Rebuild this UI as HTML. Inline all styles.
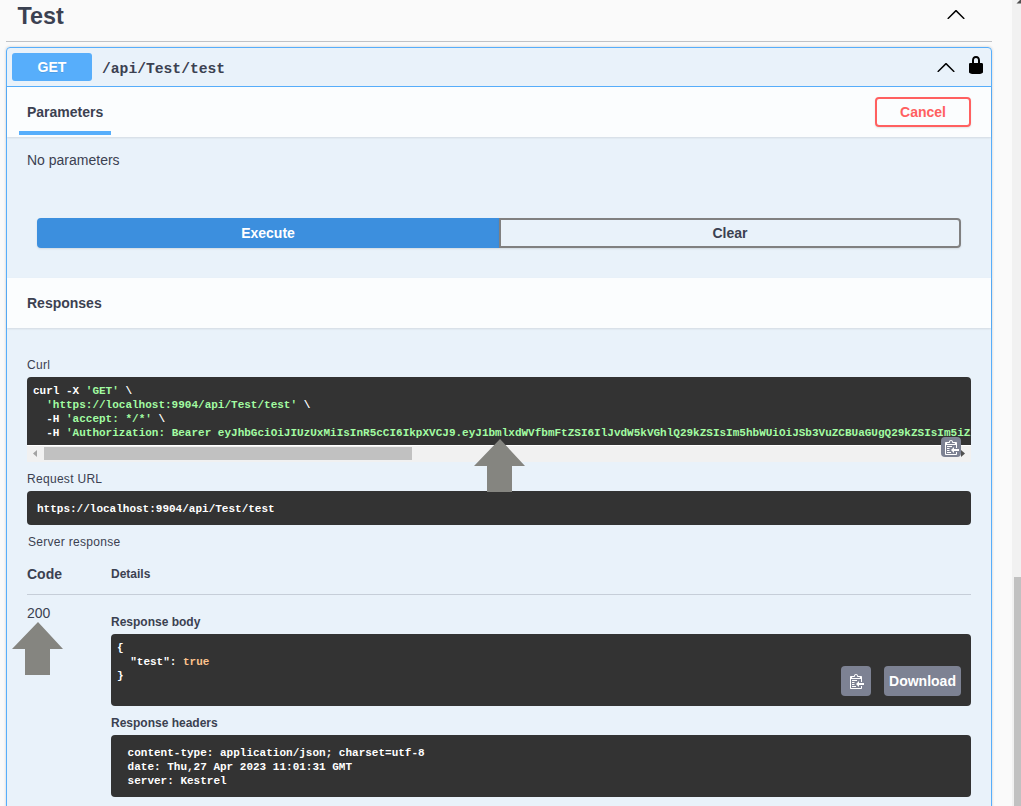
<!DOCTYPE html>
<html lang="en">
<head>
<meta charset="utf-8">
<title>Swagger UI</title>
<style>
html,body{margin:0;padding:0;}
body{width:1021px;height:806px;overflow:hidden;position:relative;background:#fafafa;
  font-family:"Liberation Sans",Arial,sans-serif;color:#3b4151;}
.a{position:absolute;white-space:nowrap;line-height:1;margin:0;padding:0;}
.b{font-weight:700;}
.mono{font-family:"Liberation Mono","DejaVu Sans Mono",monospace;font-weight:700;}
#tagline{left:6px;top:41px;width:986px;height:1px;background:rgba(59,65,81,.3);}
#opblock{left:6px;top:47px;width:984px;height:800px;border:1px solid #57aefb;border-radius:4px;
  background:rgba(87,174,251,.1);box-shadow:0 0 3px rgba(0,0,0,.19);}
#sumline{left:7px;top:86px;width:984px;height:1px;background:#57aefb;}
#get{left:12px;top:53px;width:80px;height:28px;border-radius:3px;background:#57aefb;color:#fff;
  font-size:14px;font-weight:700;text-align:center;line-height:28px;text-shadow:0 1px 0 rgba(0,0,0,.1);}
.sechead{left:7px;width:984px;height:50px;background:rgba(255,255,255,.8);box-shadow:0 1px 2px rgba(0,0,0,.1);}
#tabline{left:19px;top:131px;width:92px;height:4px;background:#57aefb;}
.btn{box-sizing:border-box;height:30px;font-size:14px;font-weight:700;text-align:center;line-height:26px;
  border:2px solid gray;border-radius:4px;box-shadow:0 1px 2px rgba(0,0,0,.1);}
#cancel{left:875px;top:97px;width:96px;border-color:#ff6060;color:#ff6060;}
#execute{left:37px;top:218px;width:462px;background:#3c8fde;border-color:#3c8fde;color:#fff;border-radius:4px 0 0 4px;}
#clear{left:499px;top:218px;width:462px;border-radius:0 4px 4px 0;}
.dark{background:#333;border-radius:4px;overflow:hidden;}
.code{font-size:11px;line-height:14px;color:#fff;white-space:pre;margin:0;}
.g{color:#a2fca2;}
.o{color:#fcc28c;}
.h12{font-size:12px;letter-spacing:.3px;}
.h12.b{letter-spacing:0;}
.h14{font-size:14px;}
.sq{background:#7d8293;border-radius:4px;}
</style>
</head>
<body>

<!-- tag header -->
<div class="a b" id="tag" style="left:17.500px;top:4.500px;font-size:23.400px;">Test</div>
<svg class="a" style="left:946px;top:4px" width="20" height="20" viewBox="0 0 20 20"><path d="M 17.418 14.908 C 17.69 15.176 18.127 15.176 18.397 14.908 C 18.667 14.64 18.668 14.207 18.397 13.939 L 10.489 6.109 C 10.219 5.841 9.782 5.841 9.51 6.109 L 1.602 13.939 C 1.332 14.207 1.332 14.64 1.602 14.908 C 1.873 15.176 2.311 15.176 2.581 14.908 L 10 7.767 L 17.418 14.908 Z" fill="#000"/></svg>
<div class="a" id="tagline"></div>

<!-- opblock -->
<div class="a" id="opblock"></div>
<div class="a" id="get">GET</div>
<div class="a mono" id="path" style="left:102px;top:62px;font-size:14.67px;">/api/Test/test</div>
<svg class="a" style="left:936px;top:57px" width="20" height="20" viewBox="0 0 20 20"><path d="M 17.418 14.908 C 17.69 15.176 18.127 15.176 18.397 14.908 C 18.667 14.64 18.668 14.207 18.397 13.939 L 10.489 6.109 C 10.219 5.841 9.782 5.841 9.51 6.109 L 1.602 13.939 C 1.332 14.207 1.332 14.64 1.602 14.908 C 1.873 15.176 2.311 15.176 2.581 14.908 L 10 7.767 L 17.418 14.908 Z" fill="#000"/></svg>
<svg class="a" style="left:966px;top:55px" width="20" height="20" viewBox="0 0 20 20"><path d="M15.8 8H14V5.600C14 2.703 12.665 1 10 1 7.334 1 6 2.703 6 5.600V8H4c-.553 0-1 .646-1 1.199V17c0 .549.428 1.139.951 1.307l1.197.387C5.672 18.861 6.550 19 7.100 19h5.800c.549 0 1.428-.139 1.951-.307l1.196-.387c.524-.167.953-.757.953-1.306V9.199C17 8.646 16.352 8 15.800 8zM12 8H8V5.199C8 3.754 8.797 3 10 3c1.203 0 2 .754 2 2.199V8z" fill="#000"/></svg>
<div class="a" id="sumline"></div>

<!-- parameters header -->
<div class="a sechead" style="top:87px;"></div>
<div class="a b h14" id="params" style="left:27px;top:105px;">Parameters</div>
<div class="a" id="tabline"></div>
<div class="a btn" id="cancel">Cancel</div>

<div class="a h14" id="noparams" style="left:27px;top:153px;">No parameters</div>

<div class="a btn" id="execute">Execute</div>
<div class="a btn" id="clear">Clear</div>

<!-- responses header -->
<div class="a sechead" style="top:278px;"></div>
<div class="a b h14" id="responses" style="left:27px;top:296px;">Responses</div>

<!-- curl -->
<div class="a h12" id="curl" style="left:27px;top:359px;">Curl</div>
<div class="a dark" id="curlbox" style="left:27px;top:377px;width:944px;height:68px;border-radius:4px 4px 0 0;">
<pre class="a mono code" id="curlcode" style="left:6px;top:7px;">curl -X <span class="g">'GET'</span> \
  <span class="g">'https://localhost:9904/api/Test/test'</span> \
  -H <span class="g">'accept: */*'</span> \
  -H <span class="g">'Authorization: Bearer eyJhbGciOiJIUzUxMiIsInR5cCI6IkpXVCJ9.eyJ1bmlxdWVfbmFtZSI6IlJvdW5kVGhlQ29kZSIsIm5hbWUiOiJSb3VuZCBUaGUgQ29kZSIsIm5iZiI6MTY4MjU5MzIwMCwiZXhwIjoxNjgyNTk2ODAwLCJpYXQiOjE2ODI1OTMyMDB9'</span></pre>
</div>
<!-- horizontal scrollbar -->
<div class="a" id="hscroll" style="left:27px;top:445px;width:944px;height:17px;background:#f1f1f1;border-top:1px solid #fff;box-sizing:border-box;"></div>
<div class="a" id="hthumb" style="left:44px;top:447px;width:368px;height:13px;background:#c1c1c1;"></div>
<svg class="a" style="left:27px;top:445px" width="17" height="17" viewBox="0 0 17 17"><path d="M6 8.500 L10 5 L10 12 Z" fill="#a3a3a3"/></svg>
<svg class="a" style="left:954px;top:445px" width="17" height="17" viewBox="0 0 17 17"><path d="M11 8.500 L7 5 L7 12 Z" fill="#505050"/></svg>
<!-- copy button (curl) -->
<div class="a sq" id="copy1" style="left:941px;top:437px;width:20px;height:20px;"></div>
<svg class="a" style="left:943px;top:440px" width="16" height="16" viewBox="0 0 16 16"><g transform="translate(2,-1)"><path fill="#fff" fill-rule="evenodd" d="M2 13h4v1H2v-1zm5-6H2v1h5V7zM9 10V8L6 11l3 3v-2h5v-2H9zM4.500 9H2v1h2.500V9zM2 12h2.500v-1H2v1zm9 1h1v2c-.020.280-.110.520-.300.700-.190.180-.420.280-.700.300H1c-.550 0-1-.450-1-1V4c0-.550.450-1 1-1h3c0-1.110.890-2 2-2 1.110 0 2 .890 2 2h3c.550 0 1 .450 1 1v5h-1V6H1v9h10v-2zM2 5h8c0-.550-.450-1-1-1H8c-.550 0-1-.450-1-1s-.450-1-1-1-1 .450-1 1-.450 1-1 1H3c-.550 0-1 .450-1 1z"/></g></svg>

<!-- request url -->
<div class="a h12" id="requrl" style="left:27px;top:473px;">Request URL</div>
<div class="a dark" id="urlbox" style="left:27px;top:491px;width:944px;height:34px;">
<pre class="a mono code" id="urlcode" style="left:10px;top:11px;">https://localhost:9904/api/Test/test</pre>
</div>

<div class="a h12" id="srvresp" style="left:28px;top:536px;">Server response</div>
<div class="a b h14" id="codeh" style="left:27px;top:567px;">Code</div>
<div class="a b h12" id="detailsh" style="left:111px;top:568px;">Details</div>
<div class="a" id="thline" style="left:27px;top:594px;width:944px;height:1px;background:rgba(59,65,81,.2);"></div>

<div class="a h14" id="c200" style="left:27px;top:606px;">200</div>
<div class="a b h12" id="rbody" style="left:111px;top:616px;">Response body</div>
<div class="a dark" id="bodybox" style="left:111px;top:634px;width:860px;height:72px;">
<pre class="a mono code" id="bodycode" style="left:6px;top:7px;">{
  "test": <span class="o">true</span>
}</pre>
</div>
<div class="a sq" id="copy2" style="left:841px;top:666px;width:30px;height:30px;"></div>
<svg class="a" style="left:848px;top:674px" width="16" height="16" viewBox="0 0 16 16"><g transform="translate(2,-1)"><path fill="#fff" fill-rule="evenodd" d="M2 13h4v1H2v-1zm5-6H2v1h5V7zM9 10V8L6 11l3 3v-2h5v-2H9zM4.500 9H2v1h2.500V9zM2 12h2.500v-1H2v1zm9 1h1v2c-.020.280-.110.520-.300.700-.190.180-.420.280-.700.300H1c-.550 0-1-.450-1-1V4c0-.550.450-1 1-1h3c0-1.110.890-2 2-2 1.110 0 2 .890 2 2h3c.550 0 1 .450 1 1v5h-1V6H1v9h10v-2zM2 5h8c0-.550-.450-1-1-1H8c-.550 0-1-.450-1-1s-.450-1-1-1-1 .450-1 1-.450 1-1 1H3c-.550 0-1 .450-1 1z"/></g></svg>
<div class="a sq b" id="download" style="left:884px;top:666px;width:77px;height:30px;color:#fff;font-size:14px;line-height:30px;text-align:center;">Download</div>

<div class="a b h12" id="rheaders" style="left:111px;top:717px;">Response headers</div>
<div class="a dark" id="hdrbox" style="left:111px;top:735px;width:860px;height:62px;">
<pre class="a mono code" id="hdrcode" style="left:10px;top:11px;"> content-type: application/json; charset=utf-8 
 date: Thu,27 Apr 2023 11:01:31 GMT 
 server: Kestrel </pre>
</div>

<!-- annotation arrows -->
<svg class="a" style="left:0;top:0;pointer-events:none" width="1021" height="806" viewBox="0 0 1021 806">
<polygon points="500,439 525,466 512,466 512,492 487,492 487,466 474,466" fill="#858580"/>
<polygon points="38,622 63,649 50,649 50,675 25,675 25,649 12,649" fill="#858580"/>
</svg>

<!-- page scrollbar -->
<div class="a" style="left:1012px;top:0;width:9px;height:806px;background:#f1f1f1;"></div>
<div class="a" style="left:1014px;top:577px;width:7px;height:229px;background:#c1c1c1;"></div>
<svg class="a" style="left:1012px;top:0" width="9" height="6" viewBox="0 0 9 6"><path d="M4.500 3.500 L9 -1 L9 3.500 Z" fill="#505050"/></svg>

</body>
</html>
